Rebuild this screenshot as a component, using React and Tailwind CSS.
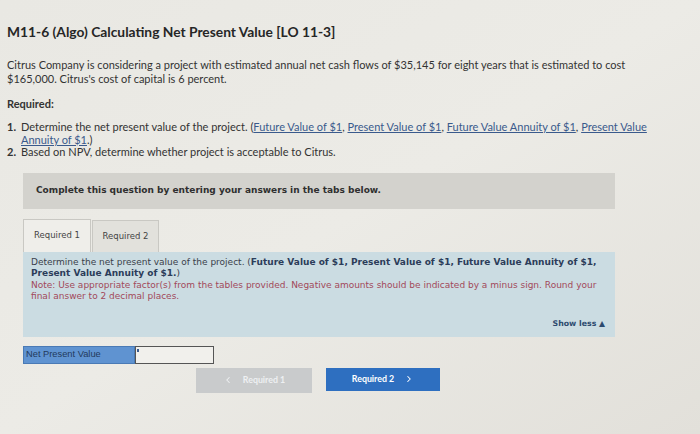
import React from 'react';
import { ChevronLeft, ChevronRight } from 'lucide-react';

const links = [
  'Future Value of $1',
  'Present Value of $1',
  'Future Value Annuity of $1',
];

const App = () => {
  return (
    <div className="w-[700px] h-[434px] overflow-hidden bg-gradient-to-br from-[#e9e8e3] via-[#ecebe6] to-[#e2e0da] text-[#2b2b2b] font-['Lato',sans-serif] relative">
      <div className="pl-[7px] pt-[22px]">
        <h1 className="text-[13.8px] font-bold leading-[20px] text-[#262626]">
          M11-6 (Algo) Calculating Net Present Value [LO 11-3]
        </h1>

        <p className="mt-[16px] w-[625px] text-[11px] leading-[14px] text-[#333]">
          Citrus Company is considering a project with estimated annual net cash flows of $35,145 for eight years that is estimated to cost $165,000. Citrus's cost of capital is 6 percent.
        </p>

        <p className="mt-[11px] text-[11px] font-bold leading-[14px] text-[#333]">Required:</p>

        <ol className="mt-[10px] text-[11px] leading-[12.5px] text-[#333] w-[648px]">
          <li className="flex">
            <span className="w-[14px] shrink-0 font-bold">1.</span>
            <span>
              Determine the net present value of the project. (
              {links.map((l) => (
                <React.Fragment key={l}>
                  <span className="underline text-[#3a5a8c]">{l}</span>,{' '}
                </React.Fragment>
              ))}
              <span className="underline text-[#3a5a8c]">Present Value Annuity of $1</span>.)
            </span>
          </li>
          <li className="flex">
            <span className="w-[14px] shrink-0 font-bold">2.</span>
            <span>Based on NPV, determine whether project is acceptable to Citrus.</span>
          </li>
        </ol>
      </div>

      <div className="ml-[23px] w-[592px]">
        <div className="mt-[14px] h-[36px] bg-[#d3d2cd] flex items-center pl-[13px] font-['DejaVu_Sans',sans-serif] text-[9px] font-bold text-[#2f2f2f]">
          Complete this question by entering your answers in the tabs below.
        </div>

        <div className="mt-[10px] flex items-end font-['DejaVu_Sans',sans-serif] text-[8.5px] text-[#444]">
          <div className="w-[68px] h-[33px] bg-[#efeeea] border border-[#c9c8c3] border-b-0 flex items-center justify-center">
            Required 1
          </div>
          <div className="w-[67px] h-[32px] bg-[#e2e1dc] border border-[#c9c8c3] border-b-0 flex items-center justify-center ml-[1px]">
            Required 2
          </div>
        </div>

        <div className="h-[85px] bg-[#cbdce2] px-[8px] pt-[5px] font-['DejaVu_Sans',sans-serif] text-[9px] leading-[11.5px] relative">
          <p className="text-[#3a3f4a]">
            Determine the net present value of the project. (
            <b className="text-[#2c3d5a]">Future Value of $1, Present Value of $1, Future Value Annuity of $1, Present Value Annuity of $1.</b>)
          </p>
          <p className="text-[#a2495a]">
            Note: Use appropriate factor(s) from the tables provided. Negative amounts should be indicated by a minus sign. Round your final answer to 2 decimal places.
          </p>
          <div className="absolute right-[10px] bottom-[7px] text-[7.8px] font-bold text-[#2c4a6e]">Show less ▲</div>
        </div>

        <div className="mt-[9px] flex h-[18px]">
          <div className="w-[112px] bg-[#5f93d1] border border-[#4a7ab5] text-[#233a5c] text-[9.3px] flex items-center pl-[2px] font-['Liberation_Sans',sans-serif]">
            Net Present Value
          </div>
          <div className="w-[79px] bg-[#f1f0ec] border border-[#555] relative">
            <span className="absolute left-[1px] top-[2px] w-[2px] h-[3px] bg-[#3a5a8c]" />
          </div>
        </div>

        <div className="mt-[4px] flex ml-[173px] gap-[14px] font-['Lato',sans-serif] text-[8.8px] font-bold">
          <div className="w-[116px] h-[25px] bg-[#c9cbcc] text-[#eef0f2] flex items-center justify-center gap-[10px]">
            <ChevronLeft size={10} strokeWidth={2.5} />
            <span>Required 1</span>
          </div>
          <div className="w-[114px] h-[23px] bg-[#2e6fc0] text-white flex items-center justify-center gap-[10px]">
            <span>Required 2</span>
            <ChevronRight size={10} strokeWidth={2.5} />
          </div>
        </div>
      </div>
    </div>
  );
};

export default App;
